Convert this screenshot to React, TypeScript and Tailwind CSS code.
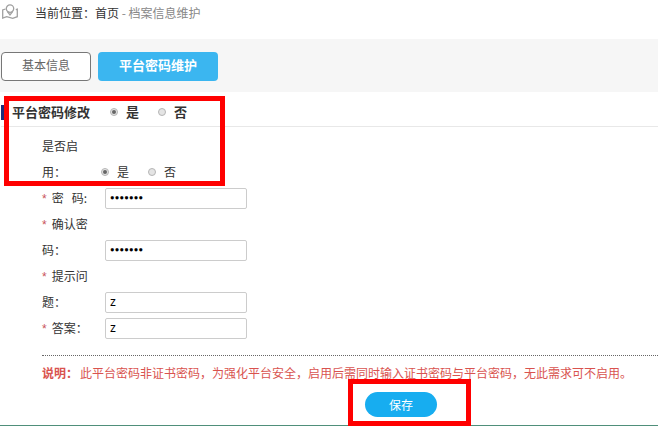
const font = { fontFamily: '"Noto Sans CJK SC", "Liberation Sans", sans-serif' };

function Radio({ checked }: { checked?: boolean }) {
  return (
    <span className="flex h-[8px] w-[8px] items-center justify-center rounded-full border border-[#b5b5b5] bg-[#e4e4e4]">
      {checked && <span className="h-[4px] w-[4px] rounded-full bg-[#666]" />}
    </span>
  );
}

function Row({ label, children, wrap }: { label: React.ReactNode; children?: React.ReactNode; wrap?: React.ReactNode }) {
  return (
    <div className="flex text-[12px] leading-[26px] text-[#333]">
      <div className="w-[63px] shrink-0">
        {wrap && <div className="h-[26px]">{wrap}</div>}
        <div className="h-[26px]">{label}</div>
      </div>
      <div className="flex flex-col justify-end">{children}</div>
    </div>
  );
}

function Field({ value, password }: { value: string; password?: boolean }) {
  return (
    <div className="mb-[2.5px] flex h-[21px] w-[142px] items-center rounded-[2px] border border-[#ccc] bg-white pl-[4px] text-[12px] leading-none text-black">
      <span className={password ? "text-[7.5px] tracking-[0.2px]" : ""} style={{ fontFamily: '"Liberation Sans", sans-serif' }}>{value}</span>
    </div>
  );
}

const Star = () => <span className="mr-[5px] text-[#c9535a]" style={{ fontFamily: '"Liberation Sans", sans-serif' }}>*</span>;

export default function App() {
  return (
    <div className="relative h-[426px] w-[658px] overflow-hidden bg-white" style={font}>
      <div className="flex h-[39px] items-start pt-[3px]">
        <svg className="ml-[2px] mt-[1px] h-[15px] w-[16px]" viewBox="0 0 16 15" fill="none" stroke="#a0a0a0" strokeWidth="1.3">
          <path d="M3.5 5 .7 6v8l4-1.3 6 1.6 4.6-1.6V5.2l-1.5.4" />
          <circle cx="8" cy="4.6" r="3.7" />
          <path d="M5.4 7.6 8 11l2.6-3.4" />
        </svg>
        <div className="ml-[17px] mt-[1px] text-[12px] leading-[18px] text-[#333]">
          当前位置：首页 <span className="text-[#888]">- 档案信息维护</span>
        </div>
      </div>

      <div className="flex h-[53px] items-start gap-[7px] bg-[#f6f6f6] pl-[1px] pt-[13px]">
        <div className="flex h-[29px] w-[90px] items-center justify-center rounded-[4px] border border-[#777] bg-white pb-[3px] text-[12px] text-[#666]">基本信息</div>
        <div className="flex h-[29px] w-[120px] items-center justify-center rounded-[4px] bg-[#3bb6f0] pb-[3px] text-[13px] font-bold text-white">平台密码维护</div>
      </div>

      <div className="ml-[1px] mt-[13px] flex h-[22px] items-center border-b border-[#e8e8e8] pb-[7px] text-[13px] font-bold text-[#333]">
        <span className="h-[15px] w-[3px] bg-[#1c2f7c]" />
        <span className="ml-[8px]">平台密码修改</span>
        <span className="ml-[20px]"><Radio checked /></span>
        <span className="ml-[8px]">是</span>
        <span className="ml-[19px]"><Radio /></span>
        <span className="ml-[8px]">否</span>
      </div>

      <div className="ml-[42px] mt-[6px]">
        <Row wrap="是否启" label="用：">
          <div className="-ml-[4px] flex h-[26px] items-center text-[12px]">
            <Radio checked />
            <span className="ml-[8px]">是</span>
            <span className="ml-[19px]"><Radio /></span>
            <span className="ml-[8px]">否</span>
          </div>
        </Row>
        <Row label={<><Star />密<span className="ml-[8px]">码:</span></>}><Field value="●●●●●●●" password /></Row>
        <Row wrap={<><Star />确认密</>} label="码："><Field value="●●●●●●●" password /></Row>
        <Row wrap={<><Star />提示问</>} label="题："><Field value="z" /></Row>
        <Row label={<><Star />答案：</>}><Field value="z" /></Row>
      </div>

      <div className="ml-[42px] mt-[14px] border-t border-dotted border-[#666]" />
      <div className="ml-[42px] mt-[8px] whitespace-nowrap text-[12px] leading-[18px] text-[#d9534f]">
        <span className="mr-[2px] font-bold">说明：</span>此平台密码非证书密码，为强化平台安全，启用后需同时输入证书密码与平台密码，无此需求可不启用。
      </div>
      <div className="mt-[10px] flex justify-center pl-[144px]">
        <div className="flex h-[25px] w-[72px] items-center justify-center rounded-full bg-[#17adf0] text-[12px] text-white">保存</div>
      </div>
      <div className="mt-[8px] h-px bg-[#4f8f7a]" />

      <div className="absolute left-[4px] top-[96px] h-[90px] w-[221px] border-[5px] border-[#ff0000]" />
      <div className="absolute left-[348px] top-[379px] h-[47px] w-[123px] border-[5px] border-[#ff0000]" />
    </div>
  );
}
